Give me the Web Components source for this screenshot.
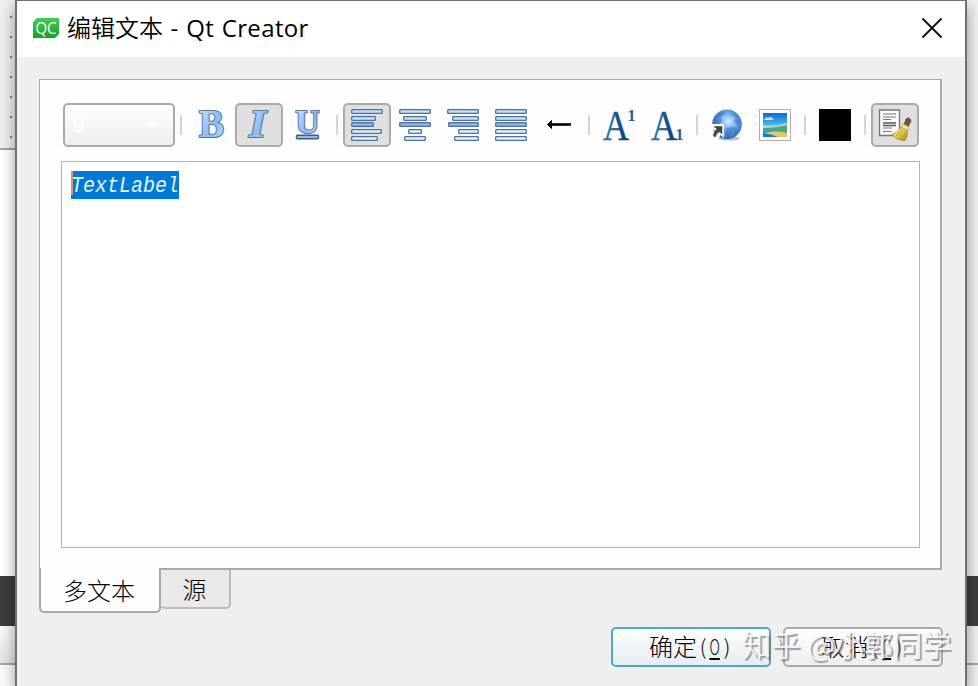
<!DOCTYPE html>
<html lang="zh-CN">
<head>
<meta charset="utf-8">
<title>编辑文本 - Qt Creator</title>
<style>
    body {
        margin: 0;
        overflow: hidden;
        font-family: "Liberation Mono", "Noto Sans CJK SC", monospace;
    }
</style>
</head>
<body>
<qt-desktop>
    <qt-dialog heading="编辑文本 - Qt Creator">
        <rich-editor>
            <tool-bar slot="tools">
                <font-size-box value="9"></font-size-box>
                <tool-separator></tool-separator>
                <tool-button icon="bold"></tool-button>
                <tool-button icon="italic" checked></tool-button>
                <tool-button icon="underline"></tool-button>
                <tool-separator></tool-separator>
                <tool-button icon="left" checked></tool-button>
                <tool-button icon="center"></tool-button>
                <tool-button icon="right"></tool-button>
                <tool-button icon="justify"></tool-button>
                <tool-button icon="arrow"></tool-button>
                <tool-separator></tool-separator>
                <tool-button icon="sup"></tool-button>
                <tool-button icon="sub"></tool-button>
                <tool-separator></tool-separator>
                <tool-button icon="link"></tool-button>
                <tool-button icon="image"></tool-button>
                <tool-separator></tool-separator>
                <tool-button icon="color"></tool-button>
                <tool-separator></tool-separator>
                <tool-button icon="simplify" checked></tool-button>
            </tool-bar>
            TextLabel
        </rich-editor>
        <tab-strip>
            <tab-item selected>多文本</tab-item>
            <tab-item>源</tab-item>
        </tab-strip>
        <push-button slot="buttons" key="O" primary>确定</push-button>
        <push-button slot="buttons" key="C">取消</push-button>
    </qt-dialog>
    <water-mark slot="overlay">知乎 @小郭同学</water-mark>
</qt-desktop>

<script>
// Shared base: puts the markup in an open shadow root
class BaseElement extends HTMLElement {
    constructor() {
        super();
        this.attachShadow({ mode: 'open' });
    }

    connectedCallback() {
        this.shadowRoot.innerHTML = this.render();
    }
}

// What is visible of the main window, left and right of the dialog
class QtDesktop extends BaseElement {
    render() {
        return `
            <style>
                :host {
                    display: grid;
                    grid-template-columns: 15px 952px 11px;
                    height: 686px;
                    position: relative;
                    overflow: hidden;
                }
                .side { display: flex; flex-direction: column; }
                .canvas {
                    box-sizing: border-box;
                    height: 150px;
                    background: radial-gradient(circle at 11px 10px, #808080 1.1px, transparent 1.6px) 0 7px / 15px 20px #efefef;
                    border-bottom: 2px solid #a2a2a2;
                }
                .blank { height: 426px; background: #fff; }
                .right .blank { height: 576px; background: #f1f1f1; }
                .dark { height: 50px; background: #3e3e40; }
                .status {
                    box-sizing: border-box;
                    height: 39px;
                    background: linear-gradient(#fafafa, #e2e2e2);
                    border-bottom: 2px solid #a6a6a6;
                }
                .right .status { background: #f0f0f0; }
                .rest { flex: 1; background: #fcfcfc; }
                .right .rest { background: #f0f0f0; }
            </style>
            <div class="side left">
                <div class="canvas"></div>
                <div class="blank"></div>
                <div class="dark"></div>
                <div class="status"></div>
                <div class="rest"></div>
            </div>
            <slot></slot>
            <div class="side right">
                <div class="blank"></div>
                <div class="dark"></div>
                <div class="status"></div>
                <div class="rest"></div>
            </div>
            <slot name="overlay"></slot>
        `;
    }
}

class QtDialog extends BaseElement {
    render() {
        const [cjk, latin] = this.getAttribute('heading').split(/(?<=^\S+)(?= )/);
        return `
            <style>
                :host {
                    display: flex;
                    flex-direction: column;
                    box-sizing: border-box;
                    border: 2px solid #707072;
                    border-top-width: 1px;
                    border-bottom: 0;
                    background: #efefef;
                    box-shadow: 0 6px 14px rgba(0, 0, 0, 0.4);
                    position: relative;
                }
                header {
                    display: flex;
                    align-items: center;
                    box-sizing: border-box;
                    height: 56px;
                    background: #fff;
                    padding: 0 22px 2px 16px;
                }
                .logo { margin-right: 8px; }
                h1 {
                    flex: 1;
                    margin: 0;
                    font: 400 24px/54px "Open Sans", "Noto Sans CJK SC", sans-serif;
                    color: #000;
                    white-space: pre;
                }
                .cjk { font-weight: 350; }
                .latin { letter-spacing: 0.35px; word-spacing: 1px; }
                main { padding: 22px 23px 0 22px; }
                footer {
                    display: flex;
                    justify-content: flex-end;
                    gap: 12px;
                    padding: 14px 22px 0 0;
                }
            </style>
            <header>
                <svg class="logo" width="26" height="20" viewBox="0 0 26 20">
                    <defs>
                        <linearGradient id="g" x1="0" y1="0" x2="0" y2="1">
                            <stop offset="0" stop-color="#41cd52"/>
                            <stop offset="1" stop-color="#17a02c"/>
                        </linearGradient>
                    </defs>
                    <path d="M4 0H26V16L22 20H0V4Z" fill="url(#g)"/>
                    <text x="13" y="16" text-anchor="middle" textLength="21" lengthAdjust="spacingAndGlyphs" font-family="Open Sans" font-size="16.5" fill="#fff">QC</text>
                </svg>
                <h1><span class="cjk">${cjk}</span><span class="latin">${latin}</span></h1>
                <svg width="22" height="22" viewBox="0 0 22 22">
                    <path d="M1.5 1.5L20.5 20.5M20.5 1.5L1.5 20.5" stroke="#111" stroke-width="1.9" fill="none"/>
                </svg>
            </header>
            <main><slot></slot></main>
            <footer><slot name="buttons"></slot></footer>
        `;
    }
}

// Tab page with the tool bar and the text edit
class RichEditor extends BaseElement {
    render() {
        return `
            <style>
                :host {
                    display: block;
                    box-sizing: border-box;
                    height: 491px;
                    padding: 23px 20px 0 21px;
                    border: solid #a9a9a9;
                    border-width: 1px 2px 2px 1px;
                    background: #fdfdfd;
                }
                .edit {
                    box-sizing: border-box;
                    width: 859px;
                    height: 387px;
                    margin-top: 14px;
                    padding: 9px;
                    border: 1px solid #b2b2b2;
                    background: #fff;
                }
                .selection {
                    display: inline-block;
                    box-sizing: border-box;
                    height: 28px;
                    width: 108px;
                    background: linear-gradient(#d19a66, #d19a66) 0 0 / 2px 24px no-repeat #0078d7;
                    color: #e4f6ff;
                    font: italic 20px/29px "Liberation Mono", monospace;
                    white-space: nowrap;
                }
                .text { display: inline-block; transform: scaleY(1.1); }
            </style>
            <slot name="tools"></slot>
            <div class="edit"><span class="selection"><span class="text"><slot></slot></span></span></div>
        `;
    }
}

class ToolBar extends BaseElement {
    render() {
        return `
            <style>
                :host { display: flex; align-items: center; height: 44px; margin-left: 2px; }
            </style>
            <slot></slot>
        `;
    }
}

class ToolSeparator extends BaseElement {
    render() {
        return `
            <style>
                :host { display: flex; justify-content: center; width: 12px; }
                i { width: 2px; height: 20px; background: #d5d5d5; }
            </style>
            <i></i>
        `;
    }
}

class FontSizeBox extends BaseElement {
    render() {
        return `
            <style>
                :host {
                    display: flex;
                    align-items: center;
                    justify-content: space-between;
                    box-sizing: border-box;
                    width: 112px;
                    height: 44px;
                    padding: 0 14px 0 7px;
                    border: 2px solid #aaa;
                    border-radius: 5px;
                    background: linear-gradient(#fefefe, #eee);
                    color: #fff;
                    font-size: 22px;
                }
                span { padding-top: 3px; }
            </style>
            <span>${this.getAttribute('value')}</span>
            <svg width="14" height="8" viewBox="0 0 14 8"><path d="M0 1H14L7 7Z" fill="#fff"/></svg>
        `;
    }
}

const BLUE = `
    <defs>
        <linearGradient id="b" x1="0" y1="0" x2="1" y2="1">
            <stop offset="0" stop-color="#d3e6fb"/>
            <stop offset="0.55" stop-color="#8dbcf5"/>
            <stop offset="1" stop-color="#bcdcff"/>
        </linearGradient>
        <linearGradient id="a" x1="0" y1="0" x2="1" y2="0">
            <stop offset="0" stop-color="#3b8cc8"/>
            <stop offset="0.5" stop-color="#1a5791"/>
            <stop offset="1" stop-color="#0d3361"/>
        </linearGradient>
    </defs>`;

const letter = (char, x, y, size, extra = '') => `${BLUE}
    <text x="${x}" y="${y}" text-anchor="middle" font-family="Liberation Serif" font-weight="bold" font-size="${size}"
        fill="url(#b)" stroke="#5a7898" stroke-width="2.2" stroke-linejoin="round" paint-order="stroke" ${extra}>${char}</text>`;

// rows: [x, width] of the five lines of a paragraph
const lines = rows => rows.map(([x, w], i) => {
    const y = [0.7, 7.7, 13.7, 20.7, 27.7][i];
    const fill = ['#c3ddfa', '#c9e2fc', '#8db4e5', '#e0f1ff', '#e4f2ff'][i];
    return `<rect x="${x + 0.7}" y="${y}" width="${w - 1.4}" height="3.7" rx="0.7" fill="${fill}" stroke="#4e719e" stroke-width="1.3"/>`;
}).join('');

const bigA = (x, y) => `${BLUE}
    <text x="0" y="30.5" textLength="26" lengthAdjust="spacingAndGlyphs" font-family="Liberation Serif" font-size="43" fill="url(#a)" stroke="#1a5791" stroke-width="0.4">A</text>
    <text x="${x}" y="${y}" font-family="Liberation Serif" font-weight="bold" font-size="16" fill="#275a8e">1</text>`;

const ICONS = {
    bold: letter('B', 16.5, 28, 39, 'textLength="25" lengthAdjust="spacingAndGlyphs"'),
    italic: letter('I', 14.5, 28, 39, 'font-style="italic" textLength="17" lengthAdjust="spacingAndGlyphs"'),
    underline: letter('U', 16.5, 23.5, 33, 'textLength="24" lengthAdjust="spacingAndGlyphs"') +
        '<rect x="5.5" y="26.2" width="22" height="3.6" rx="1" fill="#93bae6" stroke="#375f8b" stroke-width="1.4"/>',
    left: lines([[0, 32], [0, 25], [0, 23], [0, 31], [0, 27]]),
    center: lines([[0, 32], [4, 24], [0, 32], [9, 14], [5, 22]]),
    right: lines([[0, 32], [5, 27], [1, 31], [11, 21], [7, 25]]),
    justify: lines([[0, 32], [0, 32], [0, 32], [0, 32], [0, 32]]),
    arrow: '<path d="M5 15.5H28" stroke="#000" stroke-width="2.6"/><path d="M4.5 15.5L8.5 11.5V19.5Z" stroke="#000"/>',
    sup: bigA(24.5, 12),
    sub: bigA(24.5, 30.5),
    link: `
        <defs>
            <radialGradient id="r" cx="0.55" cy="0.4" r="0.62">
                <stop offset="0" stop-color="#d5edff"/>
                <stop offset="0.35" stop-color="#83baf0"/>
                <stop offset="0.75" stop-color="#417fca"/>
                <stop offset="1" stop-color="#245ba5"/>
            </radialGradient>
        </defs>
        <ellipse cx="18" cy="29.5" rx="11" ry="2" fill="#b9bec4"/>
        <circle cx="16" cy="15.3" r="14.8" fill="url(#r)"/>
        <path d="M4 8Q9 2 15 2L13 6L10 8L11 12L7 16L3 14ZM21 2Q29 6 30 13L27 16L23 13L24 8L20 6ZM15 19L24 18L27 22L20 28L15 25Z" fill="#3474c4" opacity="0.55"/>
        <path d="M6 10Q16 6 28 10M14 1Q8 14 15 29M21 2Q27 14 20 28" stroke="#b8dafa" stroke-width="0.8" fill="none" opacity="0.35"/>
        <path d="M1 16H12V27L9.5 24.5L5.5 30.5L1.5 28L5 21L1 19Z" fill="#fff" stroke="#fff" stroke-width="1.8"/>
        <path d="M3 17.5H11V25L8.7 22.8Q5 24 4.5 28L2.5 27Q2.5 22 6.2 20.3Z" fill="#454545" stroke="#303030" stroke-width="0.5"/>`,
    image: `
        <defs>
            <linearGradient id="s" x1="0" y1="0" x2="0" y2="1">
                <stop offset="0" stop-color="#086bd0"/>
                <stop offset="0.6" stop-color="#5cc4f7"/>
            </linearGradient>
        </defs>
        <rect x="0.5" y="0.5" width="31" height="31" fill="#fff" stroke="#b5a9b5"/>
        <path d="M4 4H28V28H4Z" fill="url(#s)"/>
        <path d="M5 11Q7 7 9 9Q12 6 15 11Z" fill="#fff" opacity="0.75"/>
        <path d="M4 16Q14 18 28 14V22H4Z" fill="#a5dfe2"/>
        <path d="M4 19Q17 19 28 16V22H4Z" fill="#58a866"/>
        <path d="M4 20.5Q16 20 28 22V28H4Z" fill="#2ba5c9"/>
        <path d="M4 25Q15 20 28 24V28H4Z" fill="#dfcb62"/>
        <path d="M4 24Q12 25 19 28H4Z" fill="#177cc0"/>`,
    color: '<rect width="32" height="32" fill="#000"/>',
    simplify: `
        <defs>
            <linearGradient id="y" x1="0" y1="0" x2="1" y2="1">
                <stop offset="0" stop-color="#fff29a"/>
                <stop offset="0.5" stop-color="#dcc952"/>
                <stop offset="1" stop-color="#a68a19"/>
            </linearGradient>
        </defs>
        <path d="M0.5 1H20.5V26.5H0.5Z" fill="#fafafa" stroke="#777" stroke-width="1.3"/>
        <path d="M4 5H17M4 8H17M4 10.5H12M4 19H13M4 22.5H13" stroke="#777" stroke-width="1.2"/>
        <path d="M4 14H17M4 16.5H17" stroke="#555" stroke-width="1.4"/>
        <path d="M25 16L27 10Q31 7 32 12L29 18Z" fill="#6d5546" stroke="#4c382d" stroke-width="0.6"/>
        <path d="M24 15L30 18L28 22L22 19Z" fill="#fbeaa4" stroke="#b59a2e" stroke-width="0.7"/>
        <path d="M22 18L28.5 21.5Q29 28 26 31.5Q17 32 13 25Q19 24 22 18Z" fill="url(#y)" stroke="#a9912c" stroke-width="0.7"/>
        <path d="M23 21Q21 25 17 27M26 23Q25 28 22 30" stroke="#ab9228" stroke-width="0.6" fill="none"/>`
};

class ToolButton extends BaseElement {
    render() {
        return `
            <style>
                :host {
                    display: flex;
                    align-items: center;
                    justify-content: center;
                    box-sizing: border-box;
                    width: 48px;
                    height: 44px;
                    border: 2px solid transparent;
                    border-radius: 5px;
                }
                :host([checked]) { background: #dfdfdf; border-color: #aaa; }
                svg { overflow: visible; }
            </style>
            <svg width="32" height="32" viewBox="0 0 32 32">${ICONS[this.getAttribute('icon')]}</svg>
        `;
    }
}

class TabStrip extends BaseElement {
    render() {
        return `
            <style>
                :host { display: flex; align-items: flex-start; height: 43px; }
            </style>
            <slot></slot>
        `;
    }
}

class TabItem extends BaseElement {
    render() {
        return `
            <style>
                :host {
                    display: block;
                    box-sizing: border-box;
                    width: 71px;
                    height: 39px;
                    margin-left: -1px;
                    border: solid #bbb;
                    border-width: 0 2px 2px 0;
                    border-radius: 0 0 5px 5px;
                    background: #e9e9e9;
                    color: #000;
                    font: 300 24px/37px "Noto Sans CJK SC", sans-serif;
                    text-align: center;
                }
                :host([selected]) {
                    width: 122px;
                    height: 45px;
                    margin: -2px 0 0;
                    padding-right: 2px;
                    border: 2px solid #aaa;
                    border-top: 0;
                    background: #fdfdfd;
                    line-height: 44px;
                    position: relative;
                }
            </style>
            <slot></slot>
        `;
    }
}

class PushButton extends BaseElement {
    render() {
        return `
            <style>
                :host {
                    display: flex;
                    justify-content: center;
                    box-sizing: border-box;
                    width: 160px;
                    height: 40px;
                    border: 2px solid #aaa;
                    border-radius: 5px;
                    background: linear-gradient(#fefefe, #eee);
                    color: #000;
                    font: 300 24px/34px "Noto Sans CJK SC", sans-serif;
                    white-space: nowrap;
                }
                :host([primary]) {
                    border-color: #4da6d4;
                    background: linear-gradient(#fefefe, #e5edf3);
                }
                /* half-width cells for the shortcut key */
                .key {
                    display: grid;
                    grid-template-columns: 12px 12px 12px;
                    justify-items: center;
                    font-size: 21px;
                    line-height: 35px;
                }
                u {
                    display: block;
                    transform: scaleX(0.68);
                    text-decoration-thickness: 2px;
                    text-underline-offset: 3px;
                }
            </style>
            <slot></slot><span class="key"><span>(</span><u>${this.getAttribute('key')}</u><span>)</span></span>
        `;
    }
}

class WaterMark extends BaseElement {
    render() {
        return `
            <style>
                :host {
                    position: absolute;
                    left: 742px;
                    top: 622px;
                    color: rgba(246, 246, 246, 0.88);
                    font: 400 29.2px/42px "Noto Sans CJK SC", sans-serif;
                    text-shadow: 2px 2px 1px rgba(100, 100, 100, 0.6);
                    white-space: nowrap;
                }
            </style>
            <slot></slot>
        `;
    }
}

customElements.define('qt-desktop', QtDesktop);
customElements.define('qt-dialog', QtDialog);
customElements.define('rich-editor', RichEditor);
customElements.define('tool-bar', ToolBar);
customElements.define('tool-separator', ToolSeparator);
customElements.define('font-size-box', FontSizeBox);
customElements.define('tool-button', ToolButton);
customElements.define('tab-strip', TabStrip);
customElements.define('tab-item', TabItem);
customElements.define('push-button', PushButton);
customElements.define('water-mark', WaterMark);
</script>
</body>
</html>
